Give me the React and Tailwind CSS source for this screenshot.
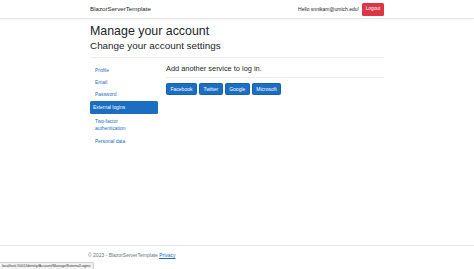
export default function App() {
  const font = { fontFamily: '"Liberation Sans", Arial, sans-serif' };
  return (
    <div className="relative flex min-h-[269px] w-[474px] flex-col bg-white text-[#212529]" style={font}>
      <header className="flex h-[19px] items-center border-b border-[#e5e5e5] shadow-[0_1px_3px_rgba(0,0,0,0.05)]">
        <div className="mx-[90px] flex w-[294px] items-center justify-between">
          <span className="pt-[1px] text-[6.2px] leading-none text-[#212529]">BlazorServerTemplate</span>
          <div className="flex items-center gap-[3px]">
            <span className="text-[5px] leading-none text-[#212529]">Hello snnikam@umich.edu!</span>
            <span className="flex h-[13px] w-[22px] items-center justify-center rounded-[1.5px] bg-[#dc3545] text-[4.8px] leading-none text-white">Logout</span>
          </div>
        </div>
      </header>
      <main className="mx-[90px] w-[294px] flex-1">
        <h1 className="mt-[4px] text-[12.4px] leading-[17px]">Manage your account</h1>
        <h2 className="mt-[-1px] text-[9.9px] leading-[14px]">Change your account settings</h2>
        <div className="mt-[4px] h-px bg-[#e9ecef]" />
        <div className="mt-[7px] flex gap-[8px]">
          <nav className="flex w-[68px] flex-col text-[4.9px] leading-[6px] text-[#1b6ec2]">
            <span className="px-[5px] py-[3px]">Profile</span>
            <span className="px-[5px] py-[3px]">Email</span>
            <span className="px-[5px] py-[3px]">Password</span>
            <span className="rounded-[1.5px] bg-[#1b6ec2] px-[3px] py-[3.5px] text-white">External logins</span>
            <span className="px-[5px] py-[3.5px] leading-[7px]">Two-factor<br />authentication</span>
            <span className="px-[5px] py-[3.5px]">Personal data</span>
          </nav>
          <section className="flex-1">
            <h3 className="mt-[-2px] text-[7.4px] leading-[12px]">Add another service to log in.</h3>
            <div className="mt-[2px] h-px bg-[#e9ecef]" />
            <div className="mt-[5px] flex gap-[2px]">
              {["Facebook", "Twitter", "Google", "Microsoft"].map((p) => (
                <span key={p} className="flex h-[12px] items-center rounded-[1.5px] border border-[#1861ac] bg-[#1b6ec2] px-[3.5px] text-[5px] leading-none text-white">{p}</span>
              ))}
            </div>
          </section>
        </div>
      </main>
      <footer className="h-[24px] border-t border-[#e5e5e5]">
        <div className="mx-[88px] pt-[6px] text-[5px] leading-[6px] text-[#6c757d]">
          © 2023 - BlazorServerTemplate <span className="text-[#1b6ec2] underline">Privacy</span>
        </div>
      </footer>
      <div className="absolute bottom-0 left-0 rounded-tr-[2px] border-t border-r border-[#cfcfcf] bg-[#f2f2f2] px-[2px] py-[1px] text-[3.6px] leading-[4px] text-[#333]">
        localhost:5001/Identity/Account/Manage/ExternalLogins
      </div>
    </div>
  );
}
